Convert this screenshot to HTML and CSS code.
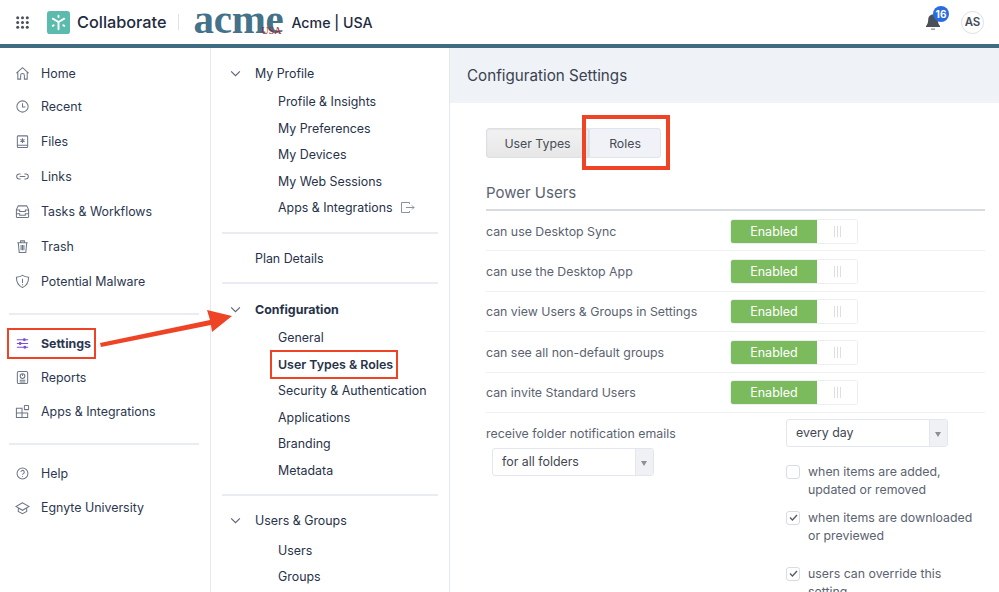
FILE: index.html
```html
<!DOCTYPE html>
<html lang="en">
<head>
<meta charset="utf-8">
<title>Configuration Settings</title>
<link rel="stylesheet" href="styles.css">
</head>
<body>
<div class="app">
  <header class="topbar">
    <svg class="grid-icon" width="13" height="13" viewBox="0 0 13 13"><g fill="#4a4f58"><circle cx="1.700" cy="1.700" r="1.500"/><circle cx="6.500" cy="1.700" r="1.500"/><circle cx="11.300" cy="1.700" r="1.500"/><circle cx="1.700" cy="6.500" r="1.500"/><circle cx="6.500" cy="6.500" r="1.500"/><circle cx="11.300" cy="6.500" r="1.500"/><circle cx="1.700" cy="11.300" r="1.500"/><circle cx="6.500" cy="11.300" r="1.500"/><circle cx="11.300" cy="11.300" r="1.500"/></g></svg>
    <span class="app-logo"><svg width="23" height="23" viewBox="0 0 24 24"><rect width="24" height="24" rx="3" fill="#5bbcae"/><g stroke="#fff" stroke-width="2" stroke-linecap="round"><path d="M12 11.500V19M12 11.500L6 8M12 11.500L18 8M12 5V6.200M6 15.500l1 -.6M18 15.500l-1 -.6"/></g></svg></span>
    <span class="app-name">Collaborate</span>
    <span class="top-sep"></span>
    <span class="acme">acme<span class="acme-usa">USA</span></span>
    <span class="org">Acme | USA</span>
    <span class="bell">
      <svg width="16" height="18" viewBox="0 0 16 18"><path d="M8 1.500c-3 0-4.800 2.300-4.800 5.200 0 3.600-1.200 5-2.200 6.300v.9h14V13c-1-1.300-2.200-2.700-2.200-6.300C12.800 3.800 11 1.500 8 1.500z" fill="#4a4f58"/><path d="M6 15.500h4v1.300H6z" fill="#8a8f98"/></svg>
      <span class="badge">16</span>
    </span>
    <span class="avatar">AS</span>
  </header>
  <div class="body">
    <nav class="nav">
      <a class="nav-item nav-first"><svg class="ico" viewBox="0 0 16 16"><path d="M1.500 7.500L8 1.800l6.500 5.700M3 6.500V14h3v-4a2 2 0 0 1 4 0v4h3V6.500"/></svg>Home</a>
      <a class="nav-item"><svg class="ico" viewBox="0 0 16 16"><circle cx="8" cy="8" r="6"/><path d="M8 4.500V8.500h3"/></svg>Recent</a>
      <a class="nav-item"><svg class="ico" viewBox="0 0 16 16"><rect x="2.500" y="2" width="11" height="12.500" rx="1"/><path d="M8 4.500v5M5.800 5.800l4.400 2.500M10.200 5.800L5.800 8.300M2.500 12h11"/></svg>Files</a>
      <a class="nav-item"><svg class="ico" viewBox="0 0 16 16"><path d="M6 5.300H4.500a2.700 2.700 0 0 0 0 5.400H6M10 5.300h1.500a2.700 2.700 0 0 1 0 5.400H10M5 8h6"/></svg>Links</a>
      <a class="nav-item"><svg class="ico" viewBox="0 0 16 16"><path d="M3.500 2h9L14.500 6v7.500a1 1 0 0 1-1 1h-11a1 1 0 0 1-1-1V6zM1.500 6.500h3.500v1.500h6V6.500h3.500M1.500 10.500h3.500v1.500h6v-1.500h3.500"/></svg>Tasks &amp; Workflows</a>
      <a class="nav-item"><svg class="ico" viewBox="0 0 16 16"><path d="M2.500 4h11M6 4V2h4v2M3.500 4l1 10.500h7l1-10.500M6.500 6.500v5.500M8 6.500v5.500M9.500 6.500v5.500"/></svg>Trash</a>
      <a class="nav-item"><svg class="ico" viewBox="0 0 16 16"><path d="M8 1.500c2 1.200 4 1.800 6.500 2 0 5.500-2 9-6.500 11-4.500-2-6.500-5.500-6.500-11 2.500-.2 4.500-.8 6.500-2zM8 5v4.500M8 11v1"/></svg>Potential Malware</a>
      <hr class="nav-rule nav-rule-a">
      <a class="nav-item nav-active"><svg class="ico ico-purple" viewBox="0 0 16 16"><path d="M2 4h12M2 8h12M2 12h12"/><circle cx="10" cy="4" r="1" fill="#7b4fd6"/><circle cx="5.500" cy="8" r="1" fill="#7b4fd6"/><circle cx="10.500" cy="12" r="1" fill="#7b4fd6"/></svg>Settings</a>
      <a class="nav-item nav-tight"><svg class="ico" viewBox="0 0 16 16"><rect x="2.500" y="1.500" width="11" height="13" rx="1.500"/><circle cx="8" cy="6.500" r="2.500"/><path d="M8 6.500V4.500M5 11h6M5 12.800h6"/></svg>Reports</a>
      <a class="nav-item"><svg class="ico" viewBox="0 0 16 16"><path d="M1.500 4.500h6v10h-6zM1.500 9.500h12v5h-6"/><rect x="10" y="1.500" width="4.500" height="4.500" rx=".5"/></svg>Apps &amp; Integrations</a>
      <hr class="nav-rule nav-rule-b">
      <a class="nav-item nav-tight"><svg class="ico" viewBox="0 0 16 16"><circle cx="8" cy="8" r="5.800"/><path d="M6.300 6.500a1.800 1.800 0 1 1 2.600 1.600c-.6.300-.9.700-.9 1.300M8 11v.6"/></svg>Help</a>
      <a class="nav-item nav-tight"><svg class="ico" viewBox="0 0 16 16"><path d="M8 3L1 7l7 4 7-4zM3.500 9v3.200L8 14.500l4.500-2.300V9"/></svg>Egnyte University</a>
    </nav>
    <aside class="subnav">
      <div class="sub-head"><svg class="chev" viewBox="0 0 12 8"><path d="M1 1.500l5 5 5-5"/></svg>My Profile</div>
      <a class="sub-link">Profile &amp; Insights</a>
      <a class="sub-link">My Preferences</a>
      <a class="sub-link">My Devices</a>
      <a class="sub-link">My Web Sessions</a>
      <a class="sub-link">Apps &amp; Integrations<svg class="ext" viewBox="0 0 15 13"><path d="M9.500 3V1.500h-8v10h8V10M6 6.500h8M12 4.500l2 2-2 2"/></svg></a>
      <hr class="sub-rule">
      <div class="sub-plain">Plan Details</div>
      <hr class="sub-rule">
      <div class="sub-head sub-bold"><svg class="chev" viewBox="0 0 12 8"><path d="M1 1.500l5 5 5-5"/></svg>Configuration</div>
      <a class="sub-link">General</a>
      <a class="sub-link sub-current">User Types &amp; Roles</a>
      <a class="sub-link">Security &amp; Authentication</a>
      <a class="sub-link">Applications</a>
      <a class="sub-link">Branding</a>
      <a class="sub-link">Metadata</a>
      <hr class="sub-rule sub-rule-last">
      <div class="sub-head sub-head-last"><svg class="chev" viewBox="0 0 12 8"><path d="M1 1.500l5 5 5-5"/></svg>Users &amp; Groups</div>
      <a class="sub-link">Users</a>
      <a class="sub-link">Groups</a>
    </aside>
    <main class="main">
      <div class="main-head">Configuration Settings</div>
      <div class="content">
        <div class="tabs"><span class="tab tab-on">User Types</span><span class="tab">Roles</span></div>
        <h2 class="section">Power Users</h2>
        <div class="row"><span class="row-label">can use Desktop Sync</span><span class="toggle"><span class="toggle-on">Enabled</span><span class="toggle-off"><i></i></span></span></div>
        <div class="row"><span class="row-label">can use the Desktop App</span><span class="toggle"><span class="toggle-on">Enabled</span><span class="toggle-off"><i></i></span></span></div>
        <div class="row"><span class="row-label">can view Users &amp; Groups in Settings</span><span class="toggle"><span class="toggle-on">Enabled</span><span class="toggle-off"><i></i></span></span></div>
        <div class="row"><span class="row-label">can see all non-default groups</span><span class="toggle"><span class="toggle-on">Enabled</span><span class="toggle-off"><i></i></span></span></div>
        <div class="row"><span class="row-label">can invite Standard Users</span><span class="toggle"><span class="toggle-on">Enabled</span><span class="toggle-off"><i></i></span></span></div>
        <div class="notify">
          <div class="notify-left">
            <div class="notify-label">receive folder notification emails</div>
            <div class="select select-left"><span class="select-val">for all folders</span><span class="select-arrow"></span></div>
          </div>
          <div class="notify-right">
            <div class="select"><span class="select-val">every day</span><span class="select-arrow"></span></div>
            <div class="check check-a"><span class="box"></span><span>when items are added, updated or removed</span></div>
            <div class="check check-b"><span class="box"><svg viewBox="0 0 10 8"><path d="M1 4l2.800 2.800L9 1.200"/></svg></span><span>when items are downloaded or previewed</span></div>
            <div class="check check-c"><span class="box"><svg viewBox="0 0 10 8"><path d="M1 4l2.800 2.800L9 1.200"/></svg></span><span>users can override this setting</span></div>
          </div>
        </div>
      </div>
    </main>
  </div>
  <span class="mark mark-settings"></span>
  <span class="mark mark-types"></span>
  <span class="mark mark-roles"></span>
  <svg class="arrow" width="145" height="50" viewBox="0 0 145 50"><path d="M2 37L112 14L109 4L134 10L114 26L113 19L3 41z" fill="#ee4425"/></svg>
</div>
</body>
</html>
```
FILE: styles.css
```css
* { box-sizing: border-box; }
html, body { margin: 0; height: 100%; }
body { font-family: Inter, "Liberation Sans", sans-serif; color: #27324a; background: #fff; overflow: hidden; }
.app { position: relative; width: 999px; height: 592px; overflow: hidden; display: flex; flex-direction: column; }

.topbar { height: 48px; flex: none; border-bottom: 4px solid #3f6c80; display: flex; align-items: center; padding-left: 16px; }
.grid-icon { flex: none; }
.app-logo { display: flex; margin-left: 18px; }
.app-name { margin-left: 7px; font-size: 16.300px; font-weight: 500; color: #1f2b40; }
.top-sep { width: 1px; height: 16px; background: #dde3ea; margin-left: 11px; }
.acme { position: relative; margin-left: 15px; font-family: "Liberation Serif", serif; font-weight: 700; font-size: 41px; line-height: 44px; letter-spacing: -.3px; color: #44728a; top: -3px; }
.acme-usa { position: absolute; left: 68px; top: 29px; font-size: 10px; line-height: 10px; font-weight: 400; letter-spacing: 0; color: #a8201a; }
.org { margin-left: 8px; font-size: 14.200px; font-weight: 500; color: #1f2b40; }
.bell { position: relative; margin-left: auto; display: flex; }
.badge { position: absolute; left: 8px; top: -7px; width: 16px; height: 16px; border-radius: 50%; background: #2a6be0; color: #fff; font-size: 10px; font-weight: 700; line-height: 16px; text-align: center; }
.avatar { width: 23px; height: 23px; margin: 0 15px 0 20px; border: 1px solid #dde0ea; border-radius: 50%; font-size: 11.500px; font-weight: 600; color: #474d58; display: flex; align-items: center; justify-content: center; }

.body { flex: 1; display: flex; min-height: 0; }
.nav { width: 211px; flex: none; border-right: 1px solid #e3e7ee; padding: 10px 11px 0 15px; }
.nav-item { display: flex; align-items: center; height: 35px; font-size: 12.400px; color: #2b3750; gap: 11px; }
.nav-first { height: 31px; }
.nav-tight { height: 34px; }
.nav-active { font-weight: 700; height: 34px; }
.ico { width: 15px; height: 15px; flex: none; fill: none; stroke: #6d7686; stroke-width: 1.100; }
.ico-purple { stroke: #7b4fd6; }
.nav-rule { border: 0; height: 2px; background: #e9ecf2; margin: 14px 0 14px -6px; }
.nav-rule-a { margin-bottom: 11px; }
.nav-rule-b { margin: 14px 0 11px -6px; }

.subnav { width: 239px; flex: none; border-right: 1px solid #e3e7ee; padding: 12.300px 11px 0 11px; font-size: 12.400px; color: #27324a; }
.sub-head { display: flex; align-items: center; height: 26px; padding-left: 8px; gap: 14px; }
.sub-bold { font-weight: 700; }
.chev { width: 11px; height: 7px; fill: none; stroke: #5c6575; stroke-width: 1.300; flex: none; }
.sub-link { display: flex; align-items: center; height: 26.600px; padding-left: 56px; }
.sub-head + .sub-link { margin-top: 2px; }
.sub-head-last + .sub-link { margin-top: 3px; }
.sub-current { font-weight: 600; }
.ext { width: 15px; height: 13px; margin-left: 7px; fill: none; stroke: #8b93a1; stroke-width: 1; }
.sub-rule { border: 0; height: 2px; background: #e9ecf2; margin: 11px 0 12px; }
.sub-rule-last { margin-top: 10px; }
.sub-plain { height: 25px; padding-left: 33px; display: flex; align-items: center; }

.main { flex: 1; min-width: 0; }
.main-head { height: 55px; background: #eff2f7; padding-left: 17px; display: flex; align-items: center; font-size: 15.200px; font-weight: 400; color: #39424f; }
.content { padding: 25px 14px 0 36px; font-size: 12.350px; color: #5b6270; }
.tabs { display: flex; height: 30px; width: 175px; }
.tab { display: flex; align-items: center; justify-content: center; font-size: 12.300px; color: #454c58; background: #f0f2f7; border: 1px solid #e0e4ec; border-radius: 0 3px 3px 0; width: 72px; }
.tab-on { width: 103px; border-radius: 3px 0 0 3px; background: linear-gradient(#f2f2f2, #e7e7e7); border-color: #dcdfe4; box-shadow: inset 0 1px 2px rgba(0,0,0,.06); }
.section { margin: 25px 0 0; height: 28px; font-size: 15px; font-weight: 400; color: #5b6270; border-bottom: 2px solid #d9dcdf; line-height: 20px; }
.row { height: 40.400px; padding-top: 1px; display: flex; align-items: center; border-bottom: 1px solid #eff1f3; }
.row-label { width: 244px; flex: none; }
.toggle { display: flex; width: 128px; height: 25px; border: 1px solid #eceef1; border-radius: 3px; overflow: hidden; }
.toggle-on { width: 86px; background: #7cba5e; color: #fff; font-size: 12.500px; display: flex; align-items: center; justify-content: center; }
.toggle-off { flex: 1; background: #fff; display: flex; align-items: center; justify-content: center; }
.toggle-off i { width: 7px; height: 11px; border-left: 1px solid #dcdfe4; border-right: 1px solid #dcdfe4; background: linear-gradient(#dcdfe4, #dcdfe4) center/1px 100% no-repeat; }
.notify { display: flex; margin-top: 6px; }
.notify-left { width: 300px; flex: none; padding-top: 7px; }
.notify-label { line-height: 15px; }
.select { display: flex; width: 162px; height: 28px; border: 1px solid #e2e6ee; border-radius: 3px; color: #3f4652; font-size: 12.400px; background: #fff; overflow: hidden; }
.select-left { margin: 7px 0 0 6px; }
.select-val { flex: 1; display: flex; align-items: center; padding-left: 9px; }
.select-arrow { width: 18px; background: #eff1f5; border-left: 1px solid #e2e6ee; position: relative; }
.select-arrow::after { content: ""; position: absolute; left: 5px; top: 12px; border: 3px solid transparent; border-top: 5px solid #8b8f97; border-bottom: 0; }
.check { display: flex; gap: 8px; width: 192px; line-height: 18.500px; }
.check-a { margin-top: 16px; }
.check-b { margin-top: 9px; }
.check-c { margin-top: 19px; }
.box { width: 14px; height: 14px; flex: none; margin-top: 2px; border: 1px solid #d8dce3; border-radius: 3px; background: #fff; display: flex; align-items: center; justify-content: center; }
.box svg { width: 9px; height: 7px; fill: none; stroke: #555b66; stroke-width: 1.500; }

.mark { position: absolute; border: 2px solid #ee4425; pointer-events: none; }
.mark-settings { left: 7px; top: 328px; width: 89px; height: 31px; }
.mark-types { left: 270px; top: 350px; width: 128px; height: 29px; }
.mark-roles { left: 582px; top: 115px; width: 88px; height: 55px; border-width: 4px; }
.arrow { position: absolute; left: 98px; top: 306px; }
```
